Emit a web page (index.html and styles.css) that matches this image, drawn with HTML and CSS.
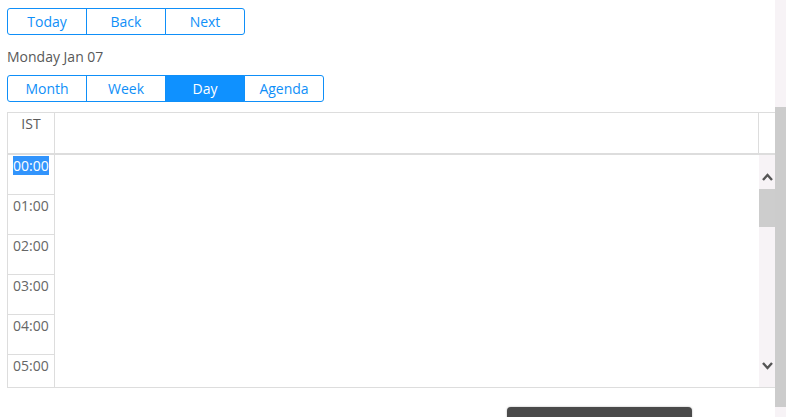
FILE: index.html
```html
<!DOCTYPE html>
<html>
<head>
<meta charset="utf-8">
<link rel="stylesheet" href="styles.css">
</head>
<body>
<div class="page">
  <main class="app">
    <div class="btn-group">
      <button class="btn">Today</button>
      <button class="btn">Back</button>
      <button class="btn">Next</button>
    </div>
    <div class="date-label">Monday Jan 07</div>
    <div class="btn-group">
      <button class="btn">Month</button>
      <button class="btn">Week</button>
      <button class="btn active">Day</button>
      <button class="btn">Agenda</button>
    </div>
    <div class="cal">
      <div class="cal-header">
        <div class="gutter-head">IST</div>
        <div class="day-head"></div>
        <div class="head-spacer"></div>
      </div>
      <div class="cal-body">
        <div class="gutter">
          <div class="slot"><span class="selected">00:00</span></div>
          <div class="slot">01:00</div>
          <div class="slot">02:00</div>
          <div class="slot">03:00</div>
          <div class="slot">04:00</div>
          <div class="slot">05:00</div>
        </div>
        <div class="day-col"></div>
        <div class="vscroll">
          <div class="vs-up">
            <svg width="11" height="8" viewBox="0 0 11 8"><polyline points="1,7 5.5,2 10,7" fill="none" stroke="#555" stroke-width="2.4"/></svg>
          </div>
          <div class="vs-thumb"></div>
          <div class="vs-rest">
            <svg width="11" height="8" viewBox="0 0 11 8"><polyline points="1,1 5.5,6 10,1" fill="none" stroke="#555" stroke-width="2.4"/></svg>
          </div>
        </div>
      </div>
    </div>
  </main>
  <div class="page-scroll">
    <div class="ps-track-top"></div>
    <div class="ps-thumb"></div>
    <div class="ps-track-bottom"></div>
  </div>
  <div class="toast"></div>
</div>
</body>
</html>
```

FILE: styles.css
```css
* { box-sizing: border-box; }
html, body { margin: 0; padding: 0; }
body {
  font-family: "Open Sans", "DejaVu Sans", sans-serif;
  font-size: 14px;
  line-height: 19px;
  color: #595959;
  background: #fff;
  overflow: hidden;
}
.page {
  position: relative;
  display: flex;
  width: 786px;
  height: 417px;
  overflow: hidden;
}
.app {
  width: 775px;
  flex: none;
  padding: 8px 0 0 7px;
}
.btn-group {
  display: flex;
}
.btn {
  font: inherit;
  width: 80px;
  height: 27px;
  padding: 0;
  margin: 0;
  background: #fff;
  color: #0f8ff8;
  border: 1px solid #0f8ff8;
  border-radius: 0;
  line-height: 19px;
  cursor: pointer;
}
.btn + .btn { margin-left: -1px; }
.btn:first-child { border-radius: 3px 0 0 3px; }
.btn:last-child { border-radius: 0 3px 3px 0; }
.btn.active {
  background: #0f91ff;
  color: #fff;
}
.date-label {
  margin: 12px 0 9px;
  color: #595959;
}
.cal {
  margin-top: 10px;
  width: 768px;
  border: 1px solid #ddd;
  border-right: none;
}
.cal-header {
  display: flex;
  height: 40px;
}
.gutter-head {
  width: 47px;
  flex: none;
  border-right: 1px solid #ddd;
  text-align: center;
  padding-top: 1px;
  color: #595959;
}
.day-head {
  width: 704px;
  flex: none;
  border-right: 1px solid #ddd;
}
.head-spacer {
  flex: 1;
}
.cal-body {
  display: flex;
  height: 234px;
  border-top: 2px solid #ddd;
}
.gutter {
  width: 47px;
  flex: none;
  border-right: 1px solid #ddd;
  overflow: hidden;
}
.slot {
  height: 40px;
  border-bottom: 1px solid #ddd;
  padding: 1px 0 0 5px;
  color: #666;
  white-space: nowrap;
}
.selected {
  background: #3294fc;
  color: #fff;
}
.day-col {
  width: 704px;
  flex: none;
}
.vscroll {
  flex: 1;
  background: #f7f3f6;
  display: flex;
  flex-direction: column;
}
.vs-up {
  height: 34px;
  display: flex;
  justify-content: center;
  padding-top: 18px;
}
.vs-thumb {
  height: 38px;
  background: #cdcdcd;
}
.vs-rest {
  flex: 1;
  display: flex;
  justify-content: center;
  align-items: flex-end;
  padding-bottom: 17px;
}
.vs-up svg, .vs-rest svg { display: block; }
.page-scroll {
  width: 11px;
  flex: none;
  display: flex;
  flex-direction: column;
  background: #f7f3f6;
}
.ps-track-top { height: 107px; }
.ps-thumb {
  height: 300px;
  background: #cccccc;
}
.ps-track-bottom { flex: 1; }
.toast {
  position: absolute;
  left: 507px;
  top: 407px;
  width: 185px;
  height: 40px;
  background: #4a4a4a;
  border-radius: 4px;
  box-shadow: 0 0 2px rgba(0,0,0,0.35);
}
```
